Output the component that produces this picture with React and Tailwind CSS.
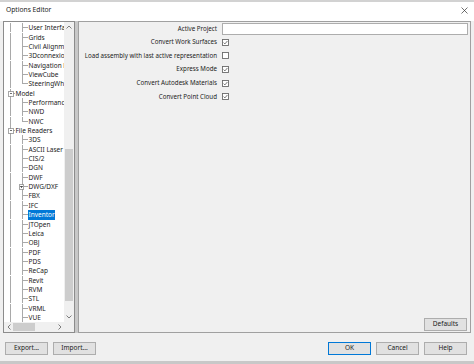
import React from "react";

const LINE = "#a9a9a9";
const ROW_H = 9.35;

const treeRows = [
  { label: "User Interface", type: "child", guide: "mid" },
  { label: "Grids", type: "child", guide: "mid" },
  { label: "Civil Alignment", type: "child", guide: "mid" },
  { label: "3Dconnexion", type: "child", guide: "mid" },
  { label: "Navigation Bar", type: "child", guide: "mid" },
  { label: "ViewCube", type: "child", guide: "mid" },
  { label: "SteeringWheels", type: "child", guide: "last" },
  { label: "Model", type: "root" },
  { label: "Performance", type: "child", guide: "mid" },
  { label: "NWD", type: "child", guide: "mid" },
  { label: "NWC", type: "child", guide: "last" },
  { label: "File Readers", type: "root" },
  { label: "3DS", type: "child", guide: "mid" },
  { label: "ASCII Laser", type: "child", guide: "mid" },
  { label: "CIS/2", type: "child", guide: "mid" },
  { label: "DGN", type: "child", guide: "mid" },
  { label: "DWF", type: "child", guide: "mid" },
  { label: "DWG/DXF", type: "child", guide: "mid", plus: true },
  { label: "FBX", type: "child", guide: "mid" },
  { label: "IFC", type: "child", guide: "mid" },
  { label: "Inventor", type: "child", guide: "mid", selected: true },
  { label: "JTOpen", type: "child", guide: "mid" },
  { label: "Leica", type: "child", guide: "mid" },
  { label: "OBJ", type: "child", guide: "mid" },
  { label: "PDF", type: "child", guide: "mid" },
  { label: "PDS", type: "child", guide: "mid" },
  { label: "ReCap", type: "child", guide: "mid" },
  { label: "Revit", type: "child", guide: "mid" },
  { label: "RVM", type: "child", guide: "mid" },
  { label: "STL", type: "child", guide: "mid" },
  { label: "VRML", type: "child", guide: "mid" },
  { label: "VUE", type: "child", guide: "mid" },
];

const properties = [
  { label: "Active Project", kind: "text" },
  { label: "Convert Work Surfaces", kind: "check", checked: true },
  { label: "Load assembly with last active representation", kind: "check", checked: false },
  { label: "Express Mode", kind: "check", checked: true },
  { label: "Convert Autodesk Materials", kind: "check", checked: true },
  { label: "Convert Point Cloud", kind: "check", checked: true },
];

// expander box, minus or plus
const Expander = ({ cx, plus }) => (
  <>
    <rect x={cx - 2} y={2.5} width={4.5} height={4.5} fill="#fff" stroke="#919191" strokeWidth="0.8" />
    <line x1={cx - 1} y1={4.75} x2={cx + 1.5} y2={4.75} stroke="#333" strokeWidth="0.7" />
    {plus && <line x1={cx + 0.25} y1={3.5} x2={cx + 0.25} y2={6} stroke="#333" strokeWidth="0.7" />}
  </>
);

const TreeGuide = ({ row }) => {
  const mid = ROW_H / 2;
  if (row.type === "root") {
    return (
      <svg width="11" height={ROW_H} className="shrink-0" shapeRendering="crispEdges">
        <line x1="6.5" y1="0" x2="6.5" y2={ROW_H} stroke={LINE} />
        <line x1="8.5" y1={mid} x2="11" y2={mid} stroke={LINE} />
        <Expander cx={6.5} />
      </svg>
    );
  }
  return (
    <svg width="24" height={ROW_H} className="shrink-0" shapeRendering="crispEdges">
      <line x1="6.5" y1="0" x2="6.5" y2={ROW_H} stroke={LINE} />
      <line x1="18.5" y1="0" x2="18.5" y2={row.guide === "last" ? mid : ROW_H} stroke={LINE} />
      <line x1="18.5" y1={mid} x2="23.5" y2={mid} stroke={LINE} />
      {row.plus && <Expander cx={17} plus />}
    </svg>
  );
};

const Checkbox = ({ checked }) => (
  <svg width="7" height="7" viewBox="0 0 7 7" className="block">
    <rect x="0.5" y="0.5" width="6" height="6" fill="#fff" stroke="#6a6a6a" strokeWidth="0.9" />
    {checked && (
      <polyline points="1.6,3.6 2.9,4.9 5.4,2" fill="none" stroke="#555" strokeWidth="0.8" />
    )}
  </svg>
);

const WinButton = ({ children, primary }) => (
  <button
    className={`w-[43px] h-[13px] flex items-center justify-center bg-[#e1e1e1] border text-[6.5px] leading-none text-[#222] ${
      primary ? "border-[#0078d7]" : "border-[#adadad]"
    }`}
  >
    {children}
  </button>
);

const App = () => {
  return (
    <div
      className="w-[474px] h-[364px] flex flex-col bg-[#f0f0f0] text-[#222] overflow-hidden"
      style={{ fontFamily: '"Noto Sans", "Open Sans", sans-serif' }}
    >
      <div className="h-[2px] bg-[#d2d2d2]" />

      {/* title bar */}
      <div className="h-[19px] bg-white flex items-center justify-between pl-[6px] pr-[6px] pb-[3px]">
        <span className="text-[6.7px] leading-none">Options Editor</span>
        <svg width="7" height="7" viewBox="0 0 7 7">
          <line x1="0.5" y1="0.5" x2="6.5" y2="6.5" stroke="#333" strokeWidth="0.7" />
          <line x1="6.5" y1="0.5" x2="0.5" y2="6.5" stroke="#333" strokeWidth="0.7" />
        </svg>
      </div>

      <div className="flex h-[312px] pl-[3px]">
        {/* tree panel */}
        <div className="w-[72px] flex flex-col bg-white border border-[#8c8c8c]">
          <div className="flex flex-1 min-h-0">
            <div className="flex-1 min-w-0 overflow-hidden pt-[1.3px]">
              {treeRows.map((row) => (
                <div key={row.label} className="flex items-center h-[9.35px] whitespace-nowrap">
                  <TreeGuide row={row} />
                  <span
                    className={`text-[6.5px] leading-[9.35px] px-[0.5px] ${
                      row.selected ? "bg-[#0078d7] text-white" : ""
                    }`}
                  >
                    {row.label}
                  </span>
                </div>
              ))}
            </div>
            <div className="w-[10px] flex flex-col bg-[#f0f0f0]">
              <div className="h-[10px] flex items-center justify-center">
                <svg width="6" height="4" viewBox="0 0 6 4">
                  <polyline points="0.5,3.5 3,1 5.5,3.5" fill="none" stroke="#606060" strokeWidth="0.8" />
                </svg>
              </div>
              <div className="flex-1 flex flex-col px-[1px]">
                <div className="h-[117px]" />
                <div className="h-[152px] bg-[#cdcdcd]" />
              </div>
              <div className="h-[10px] flex items-center justify-center">
                <svg width="6" height="4" viewBox="0 0 6 4">
                  <polyline points="0.5,0.5 3,3 5.5,0.5" fill="none" stroke="#606060" strokeWidth="0.8" />
                </svg>
              </div>
            </div>
          </div>
          <div className="h-[10px] flex">
            <div className="flex-1 flex items-center bg-[#f0f0f0]">
              <div className="w-[9px] flex justify-center">
                <svg width="4" height="6" viewBox="0 0 4 6">
                  <polyline points="3.5,0.5 1,3 3.5,5.5" fill="none" stroke="#606060" strokeWidth="0.8" />
                </svg>
              </div>
              <div className="w-[22px] h-[8px] bg-[#cdcdcd]" />
              <div className="flex-1" />
              <div className="w-[9px] flex justify-center">
                <svg width="4" height="6" viewBox="0 0 4 6">
                  <polyline points="0.5,0.5 3,3 0.5,5.5" fill="none" stroke="#606060" strokeWidth="0.8" />
                </svg>
              </div>
            </div>
            <div className="w-[10px] bg-[#f0f0f0]" />
          </div>
        </div>

        <div className="w-[3px] bg-[#c8c8c8]" />

        {/* properties panel */}
        <div className="w-[393px] flex flex-col border border-[#a0a0a0] bg-[#f0f0f0]">
          <div className="flex flex-col">
            {properties.map((p) => (
              <div key={p.label} className="flex items-center h-[13.6px]">
                <div className="w-[138px] text-right text-[6.2px] leading-none whitespace-nowrap">
                  {p.label}
                </div>
                <div className="ml-[5px] flex-1 pr-[2px] flex items-center">
                  {p.kind === "text" ? (
                    <div className="w-full h-[12px] bg-white border border-[#adadad]" />
                  ) : (
                    <Checkbox checked={p.checked} />
                  )}
                </div>
              </div>
            ))}
          </div>
          <div className="flex-1" />
          <div className="flex justify-end pr-[3px] pb-[1px]">
            <WinButton>Defaults</WinButton>
          </div>
        </div>
      </div>

      {/* bottom buttons */}
      <div className="h-[28px] flex items-start pt-[9px] pl-[5px] pr-[7px]">
        <div className="flex gap-[5px]">
          <WinButton>Export...</WinButton>
          <WinButton>Import...</WinButton>
        </div>
        <div className="flex-1" />
        <div className="flex gap-[5px]">
          <WinButton primary>OK</WinButton>
          <WinButton>Cancel</WinButton>
          <WinButton>Help</WinButton>
        </div>
      </div>

      <div className="h-[3px] bg-[#c8c8c8]" />
    </div>
  );
};

export default App;
